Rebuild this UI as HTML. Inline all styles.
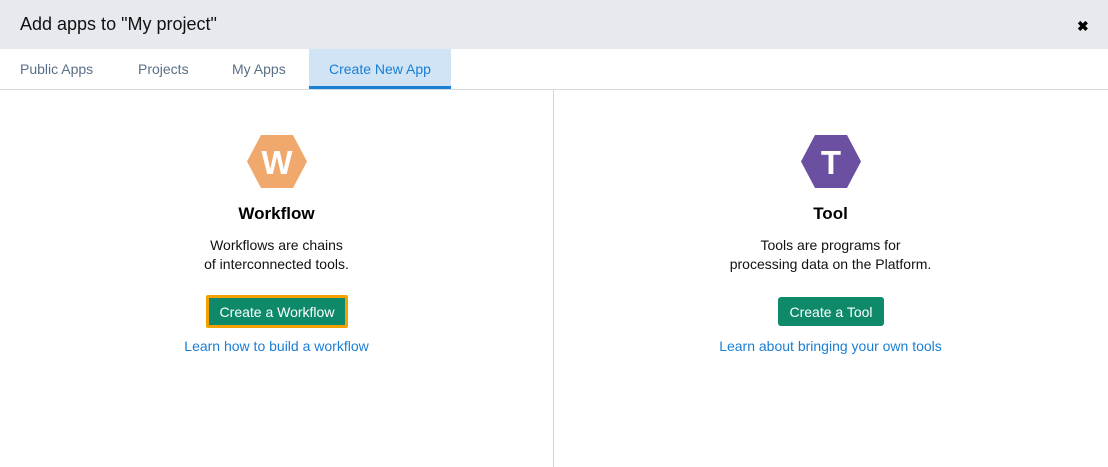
<!DOCTYPE html>
<html><head><style>
*{margin:0;padding:0;box-sizing:border-box}
body{width:1108px;height:467px;background:#fff;font-family:"Liberation Sans",Arial,sans-serif;position:relative;overflow:hidden}
.hdr{position:absolute;left:0;top:0;width:1108px;height:49px;background:#e6eaee}
.hdr .t{position:absolute;left:20px;top:14px;font-size:18px;color:#111}
.x{position:absolute;left:1077px;top:18px;font-size:14px;font-weight:bold;color:#000}
.tabs{position:absolute;top:49px;left:0;width:1108px;height:41px;border-bottom:1px solid #d5dadf}
.tab{position:absolute;top:0;height:40px;line-height:40px;font-size:14px;color:#5a6f86}
.tab.a{background:#d0e4f6;color:#1a7ed3;border-bottom:3px solid #1a7ed3;padding:0 20px;left:309px;width:142px}
.div{position:absolute;left:553px;top:90px;width:1px;height:377px;background:#d5d5d5}
.col{position:absolute;top:90px;width:553px;text-align:center}
.hex{position:absolute;top:45px}
.h{position:absolute;top:114px;width:100%;font-size:17px;font-weight:bold;color:#000}
.d{position:absolute;top:146px;width:100%;font-size:14px;line-height:19px;color:#111}
.btn{position:absolute;background:#0e8a6b;color:#fff;font-size:14px;text-align:center;border-radius:3px}
.lnk{position:absolute;top:248px;width:100%;font-size:14px;color:#1a7ed3}
</style></head><body>
<div class="hdr"><div class="t">Add apps to "My project"</div><div class="x">✖</div></div>
<div class="tabs">
<div class="tab" style="left:20px">Public Apps</div>
<div class="tab" style="left:138px">Projects</div>
<div class="tab" style="left:232px">My Apps</div>
<div class="tab a">Create New App</div>
</div>
<div class="div"></div>
<div class="col" style="left:0">
<svg class="hex" style="left:247px" width="60" height="53" viewBox="0 0 60 53"><polygon points="14,0 46,0 60,26.5 46,53 14,53 0,26.5" fill="#f0a86c"/><text x="30" y="39" font-family="Liberation Sans,Arial" font-weight="bold" font-size="33" fill="#fff" text-anchor="middle">W</text></svg>
<div class="h">Workflow</div>
<div class="d">Workflows are chains<br>of interconnected tools.</div>
<div class="btn" style="left:206px;top:205px;width:142px;height:33px;border:3px solid #f5a100;border-radius:2px;line-height:29px">Create a Workflow</div>
<div class="lnk" style="left:0">Learn how to build a workflow</div>
</div>
<div class="col" style="left:554px">
<svg class="hex" style="left:247px" width="60" height="53" viewBox="0 0 60 53"><polygon points="14,0 46,0 60,26.5 46,53 14,53 0,26.5" fill="#6b4fa1"/><text x="30" y="39" font-family="Liberation Sans,Arial" font-weight="bold" font-size="33" fill="#fff" text-anchor="middle">T</text></svg>
<div class="h">Tool</div>
<div class="d">Tools are programs for<br>processing data on the Platform.</div>
<div class="btn" style="left:224px;top:207px;width:106px;height:29px;line-height:31px">Create a Tool</div>
<div class="lnk">Learn about bringing your own tools</div>
</div>
</body></html>
